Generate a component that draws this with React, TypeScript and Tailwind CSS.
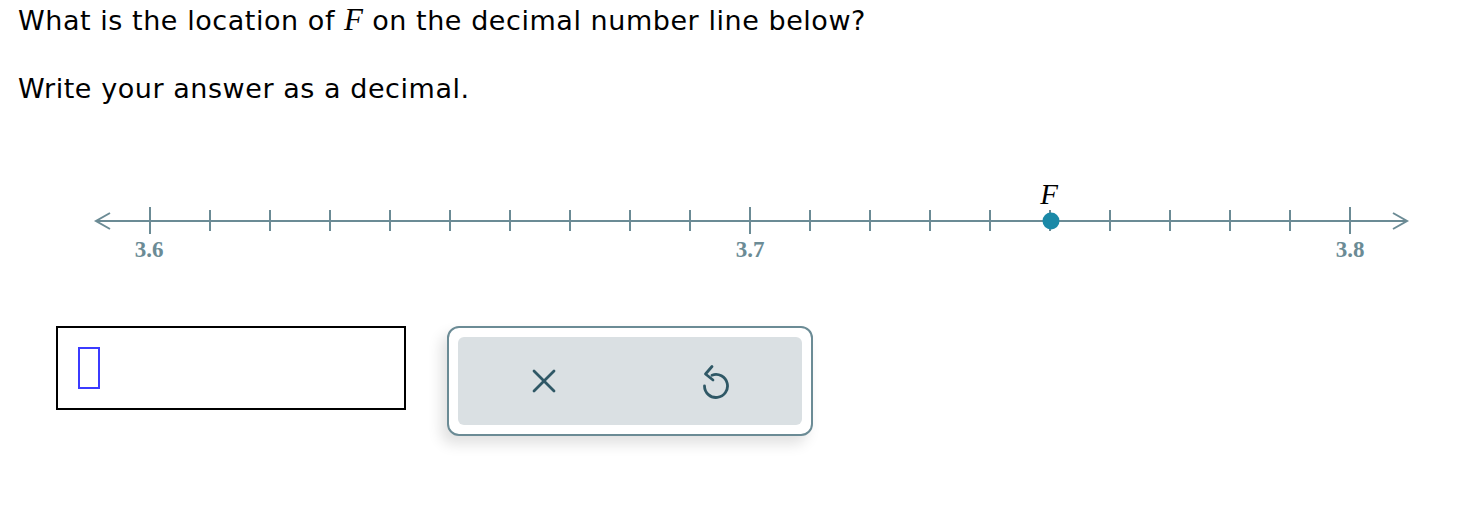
import React from 'react'

const LINE = '#6b8b95'

function NumberLine() {
  const ticks = Array.from({ length: 21 }, (_, i) => 70 + i * 60)
  const labels = [
    { x: 69, text: '3.6' },
    { x: 670, text: '3.7' },
    { x: 1270, text: '3.8' }
  ]

  return (
    <svg width="1340" height="100" viewBox="0 0 1340 100" className="block ml-[80px]">
      <line x1="17" y1="50" x2="1326" y2="50" stroke={LINE} strokeWidth="2" />
      <polyline points="30,42 16,50 30,58" fill="none" stroke={LINE} strokeWidth="2" />
      <polyline points="1313,42 1327,50 1313,58" fill="none" stroke={LINE} strokeWidth="2" />
      {ticks.map((x, i) => {
        const major = i % 10 === 0
        return (
          <line
            key={i}
            x1={x}
            x2={x}
            y1={major ? 36 : 39}
            y2={major ? 63 : 60}
            stroke={LINE}
            strokeWidth="2"
          />
        )
      })}
      {labels.map((l) => (
        <text
          key={l.text}
          x={l.x}
          y="86"
          textAnchor="middle"
          fill={LINE}
          fontFamily="'Liberation Serif', serif"
          fontWeight="700"
          fontSize="23"
        >
          {l.text}
        </text>
      ))}
      <circle cx="971" cy="50" r="8.5" fill="#1b89a7" />
      <text
        x="969"
        y="33"
        textAnchor="middle"
        fill="#000"
        fontFamily="'Liberation Serif', serif"
        fontStyle="italic"
        fontSize="29"
      >
        F
      </text>
    </svg>
  )
}

function ClearIcon() {
  return (
    <svg width="24" height="24" viewBox="0 0 24 24" fill="none" stroke="#2f5866" strokeWidth="2.8" strokeLinecap="round">
      <path d="M2 2 L22 22" />
      <path d="M22 2 L2 22" />
    </svg>
  )
}

function UndoIcon() {
  return (
    <svg width="30" height="36" viewBox="0 0 30 36" fill="none" stroke="#2f5866" strokeWidth="2.8" strokeLinecap="round" strokeLinejoin="round">
      <path d="M3.5 23 A11.5 11.5 0 1 0 11 12.2" />
      <path d="M11 3.5 L4.5 11 L12 17" />
    </svg>
  )
}

export default function App() {
  return (
    <div className="w-[1474px] h-[506px] bg-white text-black font-['DejaVu_Sans',sans-serif] overflow-hidden">
      <div className="pl-[18px] pt-[4px] text-[27px] leading-[32px] tracking-[0.55px]">
        <p>
          What is the location of{' '}
          <span className="font-['Liberation_Serif',serif] italic text-[31px] tracking-normal">F</span>{' '}
          on the decimal number line below?
        </p>
        <p className="mt-[36px]">Write your answer as a decimal.</p>
      </div>

      <div className="mt-[66px]">
        <NumberLine />
      </div>

      <div className="flex items-start gap-[41px] pl-[56px] mt-[55px]">
        <div className="w-[350px] h-[84px] border-2 border-black pl-[20px] pt-[19px]">
          <div className="w-[22px] h-[42px] border-2 border-[#3b3bff]"></div>
        </div>

        <div className="w-[366px] h-[110px] rounded-[12px] border-2 border-[#6b8b95] bg-white p-[9px] shadow-[-6px_8px_14px_rgba(0,0,0,0.12)]">
          <div className="flex h-full rounded-[6px] bg-[#dae0e3]">
            <button className="flex-1 flex items-center justify-center">
              <ClearIcon />
            </button>
            <button className="flex-1 flex items-center justify-center">
              <UndoIcon />
            </button>
          </div>
        </div>
      </div>
    </div>
  )
}
